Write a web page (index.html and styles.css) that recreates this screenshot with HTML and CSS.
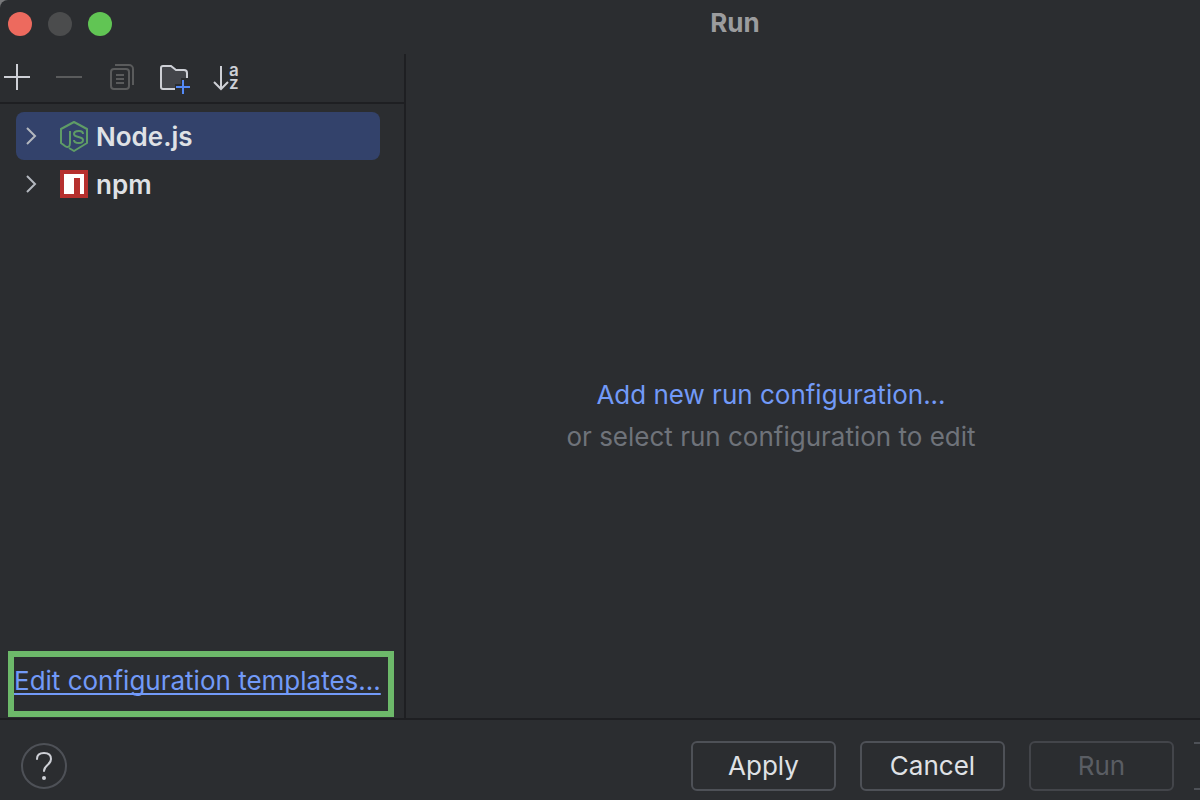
FILE: index.html
```html
<!DOCTYPE html>
<html lang="en">
<head>
  <meta charset="UTF-8" />
  <meta name="viewport" content="width=device-width, initial-scale=1.0"/>
  <title>Run</title>
  <link rel="stylesheet" href="styles.css">
</head>
<body>

  <div class="dialog">
    <header class="titlebar">
      <div class="lights">
        <button class="light close" aria-label="Close"></button>
        <button class="light minimize" aria-label="Minimize" disabled></button>
        <button class="light maximize" aria-label="Zoom"></button>
      </div>
      <h1>Run</h1>
    </header>

    <main class="content">
      <aside class="sidebar">
        <div class="toolbar">
          <button aria-label="Add">
            <svg width="32" height="32" viewBox="0 0 32 32" fill="none" stroke="#ced0d6" stroke-width="2"><path d="M16 3v26M3 16h26"/></svg>
          </button>
          <button aria-label="Remove" disabled>
            <svg width="32" height="32" viewBox="0 0 32 32" fill="none" stroke="#5a5b5c" stroke-width="2"><path d="M3 16h26"/></svg>
          </button>
          <button aria-label="Copy" disabled>
            <svg width="32" height="32" viewBox="0 0 32 32" fill="none" stroke="#5a5b5c" stroke-width="2"><rect x="6" y="8" width="18" height="20" rx="3"/><path d="M10 4h14a4 4 0 0 1 4 4v16M11 14h8M11 18h8M11 22h8"/></svg>
          </button>
          <button aria-label="New folder">
            <svg width="32" height="32" viewBox="0 0 32 32" fill="none" stroke-width="2"><path fill="#43454a" d="M4 8a3 3 0 0 1 3-3h7l4 4h9a3 3 0 0 1 3 3v5h-6v6h-6v5H7a3 3 0 0 1-3-3z"/><path stroke="#ced0d6" d="M30 17v-5a3 3 0 0 0-3-3h-8l-5-4H6a2 2 0 0 0-2 2v19a2 2 0 0 0 2 2h12"/><path stroke="#548af7" d="M26 19v14M19 26h14"/></svg>
          </button>
          <button aria-label="Sort configurations">
            <svg width="32" height="32" viewBox="0 0 32 32" fill="none" stroke="#ced0d6" stroke-width="2"><path d="M12 5v23M5 21l7 7 7-7"/><text class="sort-letter" x="20" y="15">a</text><text class="sort-letter" x="20" y="28">z</text></svg>
          </button>
        </div>

        <ul class="tree">
          <li class="selected">
            <svg class="arrow" width="32" height="32" viewBox="0 0 32 32" fill="none" stroke="#b4b8bf" stroke-width="2"><path d="M11 8l8 8-8 8"/></svg>
            <svg width="32" height="32" viewBox="0 0 32 32" fill="none" stroke="#5f9c66" stroke-width="2" stroke-linejoin="round"><path d="M11 28l5 3 13-8V9L16 2 3 9v14l4 3c3 2 5 1 5-3V11M25 14c0-2-2-3-4-3-3 0-5 1-5 3 0 4 9 2 9 6 0 2-2 3-4 3-3 0-5-1-5-3"/></svg>
            <span>Node.js</span>
          </li>
          <li>
            <svg class="arrow" width="32" height="32" viewBox="0 0 32 32" fill="none" stroke="#b4b8bf" stroke-width="2"><path d="M11 8l8 8-8 8"/></svg>
            <svg width="32" height="32" viewBox="0 0 32 32"><path fill="#b6302e" d="M2 2h28v28H2z"/><path fill="#fff" d="M6 6h20v20h-4V10h-6v16H6z"/></svg>
            <span>npm</span>
          </li>
        </ul>

        <div class="templates">
          <a href="#">Edit configuration templates...</a>
        </div>
      </aside>

      <section class="empty">
        <a href="#">Add new run configuration...</a>
        <p>or select run configuration to edit</p>
      </section>
    </main>

    <footer class="footer">
      <button class="help" aria-label="Help">
        <svg width="32" height="32" viewBox="0 0 32 32" fill="none" stroke="#ced0d6" stroke-width="2"><path d="M9 9c0-4 3-6 7-6s7 2 7 6c0 6-7 6-7 12" stroke-linecap="round"/><circle cx="16" cy="28" r="2" fill="#ced0d6" stroke="none"/></svg>
      </button>
      <div class="buttons">
        <button>Apply</button>
        <button>Cancel</button>
        <button disabled>Run</button>
      </div>
      <div class="next-button"></div>
    </footer>
  </div>

</body>
</html>
```

FILE: styles.css
```css
* {
  margin: 0;
  padding: 0;
  box-sizing: border-box;
}

body {
  background: #77787a;
  font-family: Inter, sans-serif;
  font-size: 26px;
  line-height: 32px;
  color: #dfe1e5;
}

button {
  font: inherit;
  color: inherit;
  background: none;
  border: none;
}

svg {
  display: block;
  flex-shrink: 0;
}

.dialog {
  display: flex;
  flex-direction: column;
  min-height: 100vh;
  background: #2b2d30;
  border-top-left-radius: 8px;
  overflow: hidden;
}

.titlebar {
  display: flex;
  align-items: center;
  height: 54px;
  padding: 0 0 6px 8px;
}

.lights {
  display: flex;
  gap: 16px;
  width: 262px;
}

.light {
  width: 24px;
  height: 24px;
  border-radius: 50%;
}

.close {
  background: #ed6a5e;
}

.minimize {
  background: #4b4c4d;
}

.maximize {
  background: #61c554;
}

h1 {
  flex: 1;
  padding-bottom: 2px;
  font-size: 26px;
  font-weight: 700;
  text-align: center;
  color: #9b9c9e;
}

.content {
  display: flex;
  flex: 1;
}

.sidebar {
  display: flex;
  flex-direction: column;
  width: 406px;
  border-right: 2px solid #1e1f22;
}

.toolbar {
  display: flex;
  align-items: center;
  gap: 20px;
  height: 50px;
  padding: 0 0 2px 1px;
  border-bottom: 2px solid #1e1f22;
}

.toolbar svg {
  overflow: visible;
}

.sort-letter {
  font-size: 17px;
  font-weight: 600;
  fill: #ced0d6;
  stroke: none;
}

.tree {
  flex: 1;
  padding: 8px 24px 0 16px;
  list-style: none;
}

.tree li {
  display: flex;
  align-items: center;
  height: 48px;
  border-radius: 8px;
  font-weight: 600;
}

.tree .selected {
  background: #33426b;
}

.tree .arrow {
  margin-right: 10px;
}

.tree span {
  padding-top: 2px;
  margin-left: 6px;
}

.templates {
  height: 66px;
  margin: 0 10px 1px 8px;
  padding-top: 8px;
  border: 6px solid #6db96a;
  white-space: nowrap;
}

a {
  color: #729af8;
  text-decoration: none;
}

.templates a {
  text-decoration: underline;
  text-decoration-thickness: 2px;
  text-decoration-skip-ink: none;
  text-underline-offset: 3px;
}

.empty {
  display: flex;
  flex: 1;
  flex-direction: column;
  align-items: center;
  justify-content: center;
  gap: 10px;
  padding: 60px 64px 0 0;
}

.empty p {
  color: #6f737a;
}

.footer {
  display: flex;
  align-items: center;
  gap: 20px;
  height: 82px;
  padding: 12px 0 0 21px;
  border-top: 2px solid #1e1f22;
}

.help {
  display: flex;
  align-items: center;
  justify-content: center;
  width: 46px;
  height: 46px;
  border: 2px solid #4e5157;
  border-radius: 50%;
}

.buttons {
  display: flex;
  gap: 24px;
  margin-left: auto;
}

.buttons button {
  width: 145px;
  height: 50px;
  border: 2px solid #4e5157;
  border-radius: 6px;
}

.buttons button:disabled {
  color: #5a5d63;
  border-color: #43454a;
}

/* edge of the button that runs off the window */
.next-button {
  width: 6px;
  height: 48px;
  border: solid #4e5157;
  border-width: 2px 0;
}
```
